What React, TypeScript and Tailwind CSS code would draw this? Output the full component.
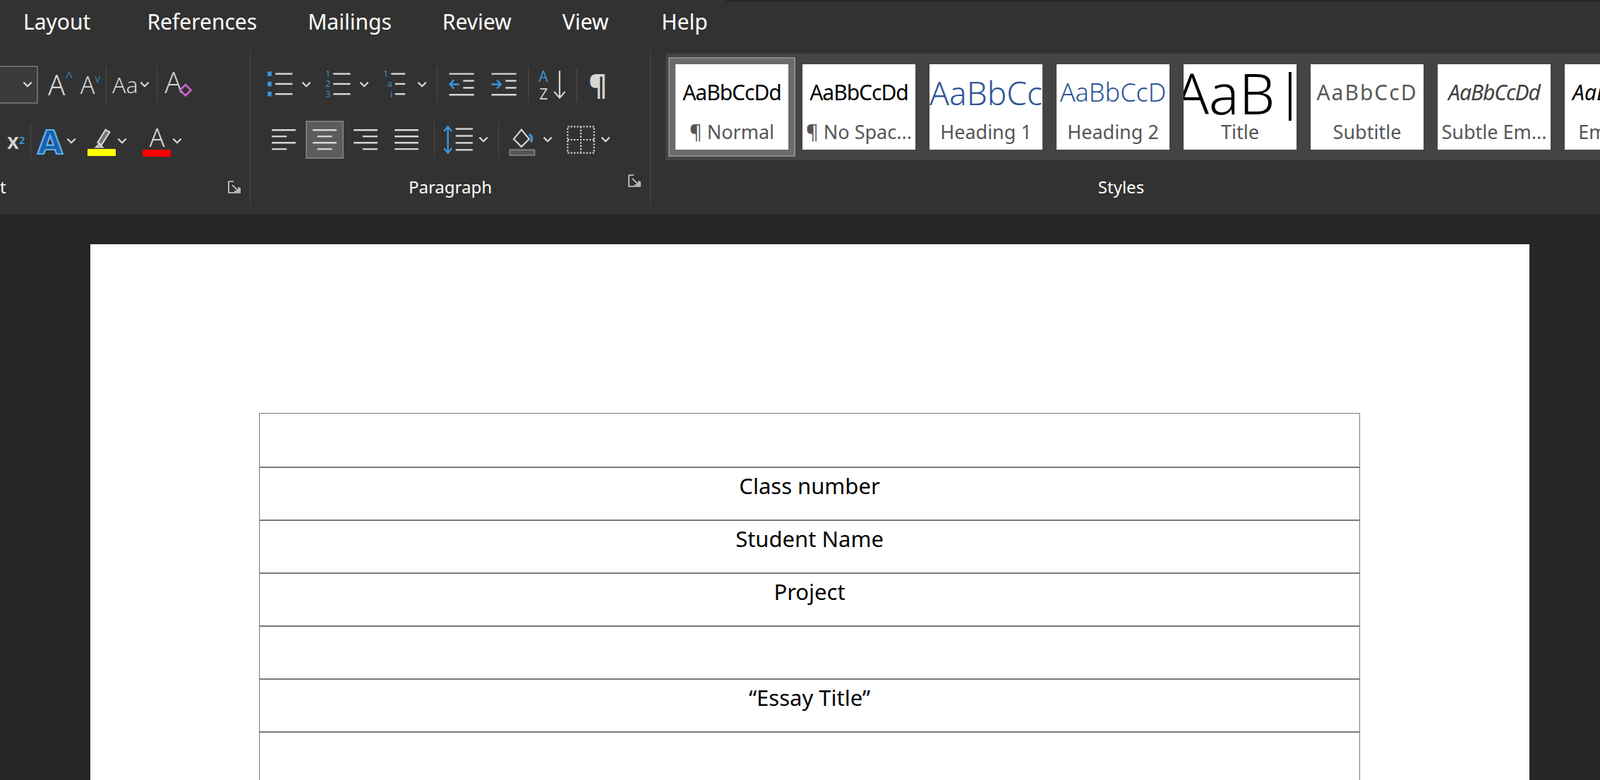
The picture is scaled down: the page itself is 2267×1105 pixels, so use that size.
import React from "react";

const C = "#d6d6d6";
const B = "#3a96dd";

const Chev = () => (
  <svg width="18" height="14" viewBox="0 0 16 12" className="shrink-0"><path d="M3 3l5 5 5-5" stroke={C} strokeWidth="2" fill="none" /></svg>
);

const Lines = ({ rows }: { rows: [number, number][] }) => (
  <svg width="38" height="36" viewBox="0 0 36 34">
    {rows.map(([x1, x2], i) => (
      <line key={i} x1={x1} x2={x2} y1={4 + i * 8.5} y2={4 + i * 8.5} stroke={C} strokeWidth="2.2" />
    ))}
  </svg>
);

const Sep = ({ h = 50 }: { h?: number }) => <div className="w-px bg-[#4c4c4c] mx-[8px] shrink-0" style={{ height: h }} />;

const Launcher = () => (
  <svg width="20" height="20" viewBox="0 0 20 20"><path d="M2 2h7M2 2v16h16v-7M7 7l9 9M10 16h6v-6" stroke={C} strokeWidth="1.6" fill="none" /></svg>
);

const Bullets = () => (
  <svg width="44" height="44" viewBox="0 0 40 40">
    {[6, 19, 32].map((y) => (<g key={y}><rect x="2" y={y - 3} width="5" height="6" fill={B} /><line x1="12" x2="34" y1={y} y2={y} stroke={C} strokeWidth="2.2" /></g>))}
  </svg>
);
const Numbering = () => (
  <svg width="44" height="44" viewBox="0 0 40 40" fontFamily="Open Sans" fontSize="11" fill={B}>
    {["1", "2", "3"].map((t, i) => (<g key={t}><text x="2" y={10 + i * 13}>{t}</text><line x1="12" x2="34" y1={6 + i * 13} y2={6 + i * 13} stroke={C} strokeWidth="2.2" /></g>))}
  </svg>
);
const Multi = () => (
  <svg width="44" height="44" viewBox="0 0 40 40" fontFamily="Open Sans" fontSize="11" fill={B}>
    <text x="2" y="10">1</text><line x1="12" x2="30" y1="6" y2="6" stroke={C} strokeWidth="2.2" />
    <text x="7" y="23">a</text><line x1="17" x2="30" y1="19" y2="19" stroke={C} strokeWidth="2.2" />
    <text x="11" y="36">i</text><line x1="17" x2="30" y1="32" y2="32" stroke={C} strokeWidth="2.2" />
  </svg>
);
const Indent = ({ inc }: { inc?: boolean }) => (
  <svg width="44" height="44" viewBox="0 0 40 40">
    <line x1="4" x2="36" y1="6" y2="6" stroke={C} strokeWidth="2.2" />
    <line x1="22" x2="36" y1="15" y2="15" stroke={C} strokeWidth="2.2" />
    <line x1="22" x2="36" y1="24" y2="24" stroke={C} strokeWidth="2.2" />
    <line x1="4" x2="36" y1="33" y2="33" stroke={C} strokeWidth="2.2" />
    {inc ? <path d="M4 19.5h12M11 14l5 5.5-5 5.5" stroke={B} strokeWidth="2.2" fill="none" /> : <path d="M5 19.5h12M10 14l-5 5.5 5 5.5" stroke={B} strokeWidth="2.2" fill="none" />}
  </svg>
);
const Sort = () => (
  <svg width="44" height="50" viewBox="0 0 40 44" fontFamily="Open Sans" fontSize="19">
    <text x="2" y="18" fill={B}>A</text>
    <text x="3" y="41" fill={C}>Z</text>
    <path d="M29 4v34M22 31l7 8 7-8" stroke={C} strokeWidth="2" fill="none" />
  </svg>
);

const Font = "font-['Open_Sans',sans-serif]";

export default function App() {
  return (
    <div className={`w-[2267px] h-[1105px] overflow-hidden bg-[#262626] ${Font} flex flex-col`}>
      {/* tabs */}
      <div className="h-[60px] shrink-0 bg-[#323232] relative flex items-center text-[30px] text-white">
        <div className="absolute top-0 left-[1029px] right-0 h-[3px] bg-[#262626]" />
        <span className="ml-[33px]">Layout</span>
        <span className="ml-[80px]">References</span>
        <span className="ml-[72px]">Mailings</span>
        <span className="ml-[72px]">Review</span>
        <span className="ml-[72px]">View</span>
        <span className="ml-[75px]">Help</span>
      </div>
      {/* ribbon */}
      <div className="h-[243px] shrink-0 bg-[#323232] flex text-[#d6d6d6]">
        {/* Font group (partial) */}
        <div className="w-[354px] shrink-0 flex flex-col relative">
          <div className="h-[33px]" />
          <div className="h-[54px] flex items-center">
            <div className="w-[54px] h-[54px] shrink-0 border-2 border-[#6a6a6a] bg-[#3b3b3b] border-l-0 flex items-center justify-end pr-[4px]"><Chev /></div>
            <div className="ml-[14px] flex items-start text-[40px] leading-none font-light">A<span className="text-[#3a96dd] text-[20px]">^</span></div>
            <div className="ml-[10px] flex items-start text-[34px] leading-none font-light">A<span className="text-[#3a96dd] text-[16px]">v</span></div>
            <Sep />
            <div className="flex items-center text-[32px] font-light">Aa<Chev /></div>
            <Sep />
            <svg width="44" height="46" viewBox="0 0 40 42"><text x="2" y="32" fontSize="38" fill={C} fontFamily="Open Sans" fontWeight="300">A</text><path d="M22 28l7-7 7 7-7 7z" stroke="#c462c4" strokeWidth="2.5" fill="none" /></svg>
          </div>
          <div className="h-[25px]" />
          <div className="h-[55px] flex items-center">
            <div className="ml-[10px] text-[30px] font-semibold">x<sup className="text-[15px] text-[#3a96dd]">2</sup></div>
            <Sep />
            <svg width="40" height="46" viewBox="0 0 36 40"><text x="1" y="36" fontSize="42" fontWeight="900" fill="#1b5fa8" stroke="#5ab0f0" strokeWidth="2" fontFamily="DejaVu Sans">A</text></svg>
            <Chev />
            <div className="ml-[14px] flex flex-col items-center">
              <svg width="34" height="32" viewBox="0 0 30 28"><path d="M12 22l-4 4h8zM10 20l10-16 5 3-10 16z" stroke={C} strokeWidth="1.8" fill="#777" /></svg>
              <div className="w-[40px] h-[10px] bg-[#ffff00]" />
            </div>
            <Chev />
            <div className="ml-[20px] flex flex-col items-center">
              <span className="text-[36px] leading-[34px] font-light">A</span>
              <div className="w-[40px] h-[10px] bg-[#ff0000]" />
            </div>
            <Chev />
          </div>
          <div className="flex-1 flex items-center justify-between pr-[12px]">
            <span className="text-[24px] text-white">t</span>
            <Launcher />
          </div>
        </div>
        <div className="w-px bg-[#4a4a4a] my-[12px]" />
        {/* Paragraph */}
        <div className="w-[566px] shrink-0 flex flex-col">
          <div className="h-[30px]" />
          <div className="h-[60px] flex items-center pl-[22px] gap-[4px]">
            <Bullets /><Chev />
            <div className="w-[8px]" /><Numbering /><Chev />
            <div className="w-[8px]" /><Multi /><Chev />
            <Sep />
            <Indent /><div className="w-[8px]" /><Indent inc />
            <Sep />
            <Sort />
            <Sep />
            <span className="text-[40px] font-bold ml-[4px]">¶</span>
          </div>
          <div className="h-[20px]" />
          <div className="h-[56px] flex items-center pl-[20px] gap-[4px]">
            <div className="w-[54px] h-[54px] flex items-center justify-center"><Lines rows={[[2, 34], [2, 22], [2, 34], [2, 22]]} /></div>
            <div className="w-[54px] h-[54px] flex items-center justify-center bg-[#5c5c5c] border-2 border-[#7a7a7a]"><Lines rows={[[2, 34], [8, 28], [2, 34], [8, 28]]} /></div>
            <div className="w-[54px] h-[54px] flex items-center justify-center"><Lines rows={[[2, 34], [14, 34], [2, 34], [14, 34]]} /></div>
            <div className="w-[54px] h-[54px] flex items-center justify-center"><Lines rows={[[2, 34], [2, 34], [2, 34], [2, 34]]} /></div>
            <Sep />
            <svg width="44" height="44" viewBox="0 0 40 40"><path d="M6 3v34M1 9l5-6 5 6M1 31l5 6 5-6" stroke={B} strokeWidth="2.2" fill="none" />{[6, 15, 24, 33].map((y) => <line key={y} x1="16" x2="38" y1={y} y2={y} stroke={C} strokeWidth="2.2" />)}</svg>
            <Chev />
            <Sep />
            <svg width="44" height="46" viewBox="0 0 40 42"><path d="M8 20l10-12 10 12-10 10z" stroke={C} strokeWidth="2" fill="none" /><path d="M28 14c4 2 4 8 2 10" stroke={B} strokeWidth="3" fill="none" /><rect x="3" y="34" width="32" height="7" fill="#555" stroke="#888" strokeWidth="1.5" /></svg>
            <Chev />
            <div className="w-[8px]" />
            <svg width="44" height="44" viewBox="0 0 40 40"><rect x="3" y="3" width="34" height="34" stroke={C} strokeWidth="2" strokeDasharray="2 2" fill="none" /><path d="M20 3v34M3 20h34" stroke={C} strokeWidth="2" strokeDasharray="2 2" /></svg>
            <Chev />
          </div>
          <div className="flex-1 flex items-center relative">
            <span className="text-[24px] text-white w-full text-center">Paragraph</span>
            <div className="absolute right-[12px] top-[20px]"><Launcher /></div>
          </div>
        </div>
        <div className="w-px bg-[#4a4a4a] my-[12px]" />
        {/* Styles */}
        <div className="flex-1 flex flex-col overflow-hidden">
          <div className="h-[16px] shrink-0" />
          <div className="h-[151px] shrink-0 ml-[21px] bg-[#444444] flex items-center gap-[20px] pl-[14px] whitespace-nowrap">
            {[
              { p: "AaBbCcDd", l: "¶ Normal", cls: "text-[30px] text-black tracking-[-1px]", sel: true },
              { p: "AaBbCcDd", l: "¶ No Spac...", cls: "text-[30px] text-black tracking-[-1px]" },
              { p: "AaBbCc", l: "Heading 1", cls: "text-[46px] text-[#2f5597] font-light" },
              { p: "AaBbCcD", l: "Heading 2", cls: "text-[36px] text-[#2f5597] font-light" },
              { p: "AaB|", l: "Title", cls: "text-[80px] text-black font-light" },
              { p: "AaBbCcD", l: "Subtitle", cls: "text-[30px] text-[#595959] tracking-[2px]" },
              { p: "AaBbCcDd", l: "Subtle Em...", cls: "text-[30px] text-[#404040] italic tracking-[-1px]" },
              { p: "AaBbCcDd", l: "Emphasis", cls: "text-[30px] text-black italic" },
            ].map((s, i) => (
              <div key={i} className={`${s.sel ? "bg-[#6b6b6b] border-2 border-[#8a8a8a] p-[8px] -mx-[10px]" : ""} shrink-0`}>
                <div className="w-[160px] h-[121px] bg-white flex flex-col items-center overflow-hidden">
                  <div className={`h-[80px] flex items-center justify-center w-full overflow-hidden ${s.cls} leading-none`}>{s.p}</div>
                  <div className="text-[27px] text-[#555] leading-none mt-[2px] whitespace-nowrap">{s.l}</div>
                </div>
              </div>
            ))}
          </div>
          <div className="flex-1 flex items-center justify-center text-[24px] text-white pr-[12px]">Styles</div>
        </div>
      </div>
      {/* document */}
      <div className="flex-1 min-h-0 pt-[43px] pl-[128px] overflow-hidden">
        <div className="w-[2039px] h-[800px] bg-white pt-[239px] pl-[239px]">
          <div className="w-[1560px] border border-[#7a7a7a] font-['Lato',sans-serif] text-[31px] text-black">
            {["", "Class number", "Student Name", "Project", "", "\u201CEssay Title\u201D", ""].map((t, i) => (
              <div key={i} className={`h-[75px] text-center pt-[2px] ${i > 0 ? "border-t-2 border-[#7a7a7a]" : ""}`}>{t}</div>
            ))}
          </div>
        </div>
      </div>
    </div>
  );
}
